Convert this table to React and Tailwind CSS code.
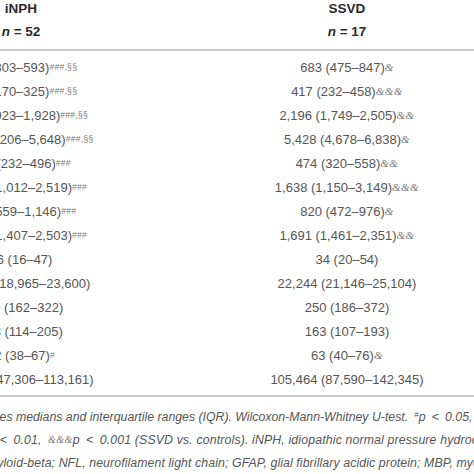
import React from "react";

const rows = [
  ["448 (303–593)", "###,§§", "683 (475–847)", "&"],
  ["236 (170–325)", "###,§§", "417 (232–458)", "&&&"],
  ["1,374 (923–1,928)", "###,§§", "2,196 (1,749–2,505)", "&&"],
  ["4,170 (3,206–5,648)", "###,§§", "5,428 (4,678–6,838)", "&"],
  ["352 (232–496)", "###", "474 (320–558)", "&&"],
  ["1,531 (1,012–2,519)", "###", "1,638 (1,150–3,149)", "&&&"],
  ["794 (559–1,146)", "###", "820 (472–976)", "&"],
  ["1,867 (1,407–2,503)", "###", "1,691 (1,461–2,351)", "&&"],
  ["26 (16–47)", "", "34 (20–54)", ""],
  ["20,744 (18,965–23,600)", "", "22,244 (21,146–25,104)", ""],
  ["229 (162–322)", "", "250 (186–372)", ""],
  ["148 (114–205)", "", "163 (107–193)", ""],
  ["52 (38–67)", "#", "63 (40–76)", "&"],
  ["76,045 (47,306–113,161)", "", "105,464 (87,590–142,345)", ""],
];

function Hash({ s }) {
  if (!s) return null;
  return (
    <sup className="text-[8.5px] relative -top-[2px] text-[#777] tracking-[0.3px]">{s}</sup>
  );
}

function Amp({ s, size = "text-[11px]" }) {
  if (!s) return null;
  return (
    <sup
      className={`${size} italic relative -top-[1px] text-[#777] tracking-[0.5px]`}
      style={{ fontFamily: '"Liberation Serif", serif' }}
    >
      {s}
    </sup>
  );
}

const LT = "\u2002<\u2002";

export default function App() {
  return (
    <div
      className="w-[474px] h-[474px] overflow-hidden bg-white text-[#555]"
      style={{ fontFamily: '"Liberation Sans", Arial, sans-serif' }}
    >
      <div className="-ml-[142px] w-[652px] flex flex-col">
        <div className="flex text-[13.5px] font-bold text-[#2a2a2a] mt-[1px]">
          <div className="w-[326px] text-center leading-[16px]">iNPH</div>
          <div className="w-[326px] text-center leading-[16px]">SSVD</div>
        </div>
        <div className="flex text-[13.5px] font-bold text-[#2a2a2a] mt-[7px]">
          <div className="w-[326px] text-center leading-[16px]">
            <span className="italic">n</span> = 52
          </div>
          <div className="w-[326px] text-center leading-[16px]">
            <span className="italic">n</span> = 17
          </div>
        </div>
        <div className="h-[2px] bg-[#c8c8c8] mt-[9px] mb-[5px]" />
        {rows.map((r, i) => (
          <div key={i} className="flex h-[24px] items-center text-[13px] whitespace-nowrap">
            <div className="w-[326px] text-center">
              {r[0]}
              <Hash s={r[1]} />
            </div>
            <div className="w-[326px] text-center">
              {r[2]}
              <Amp s={r[3]} />
            </div>
          </div>
        ))}
        <div className="h-[2px] bg-[#c8c8c8] mt-[3px]" />
      </div>
      <div className="italic text-[12.3px] leading-[23px] text-[#555] whitespace-nowrap mt-[9px]">
        <div className="-ml-[36px]">
          indicates medians and interquartile ranges (IQR). Wilcoxon-Mann-Whitney U-test.{"\u2002"}
          <sup className="text-[8px]">#</sup>p{LT}0.05, <sup className="text-[8px]">##</sup>p{LT}0.01
        </div>
        <div className="-ml-[30px] tracking-[0.15px]">
          <Amp s="&&" size="text-[10px]" />p{LT}0.01,{"\u2002"}<Amp s="&&&" size="text-[10px]" />p{LT}0.001 (SSVD vs. controls). iNPH, idiopathic normal pressure hydrocephalus; SSVD
        </div>
        <div className="-ml-[20px] tracking-[0.1px]">
          amyloid-beta; NFL, neurofilament light chain; GFAP, glial fibrillary acidic protein; MBP, myelin basic protein
        </div>
      </div>
    </div>
  );
}
